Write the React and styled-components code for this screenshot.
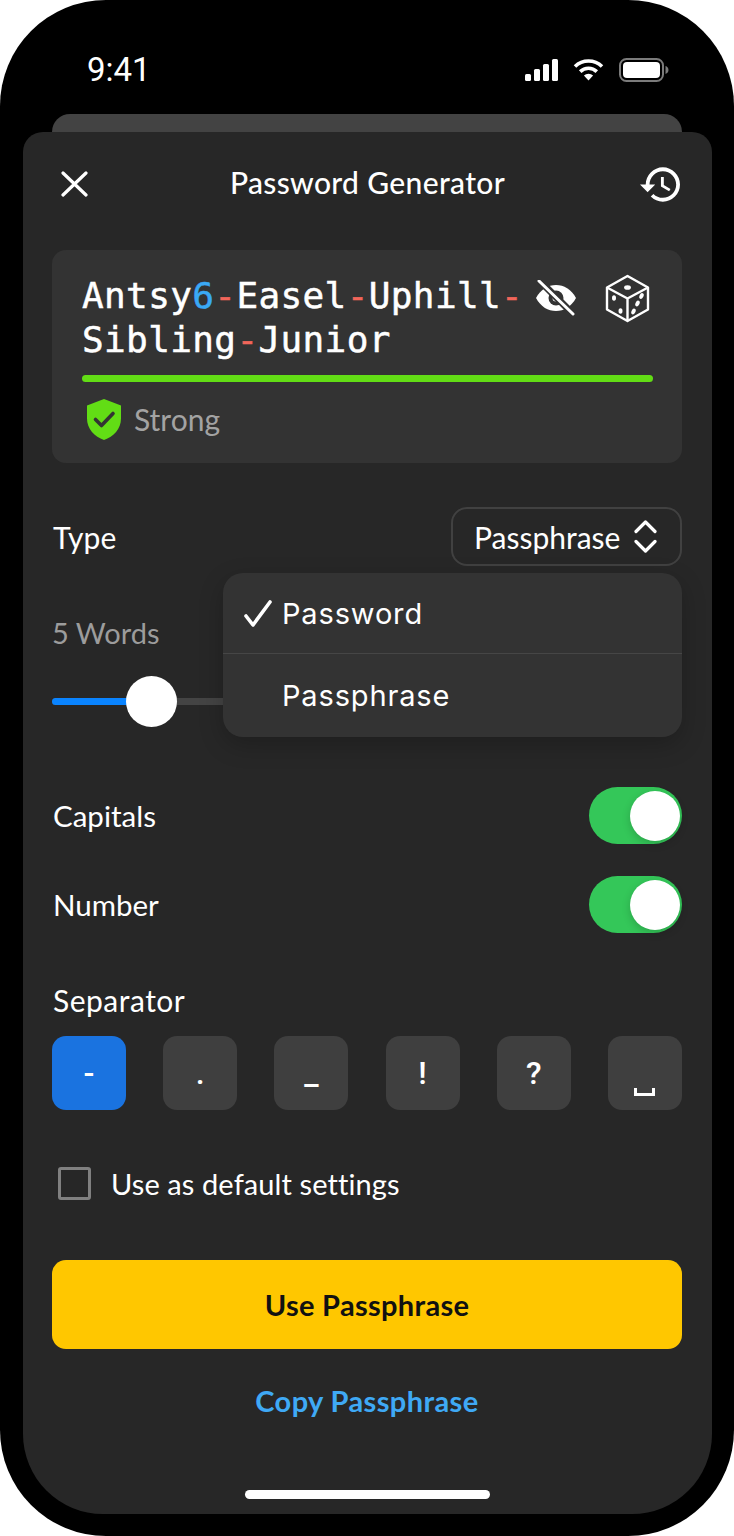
import styled, { createGlobalStyle } from "styled-components";

const GlobalStyle = createGlobalStyle`
  html, body {
    margin: 0;
    padding: 0;
    background: #fff;
  }
  * {
    box-sizing: border-box;
  }
`;

const uiFont = `"Lato", "Noto Sans", sans-serif`;
const monoFont = `"DejaVu Sans Mono", "Liberation Mono", monospace`;

const Phone = styled.div`
  width: 734px;
  height: 1536px;
  background: #000;
  border-radius: 106px;
  padding: 0 22px 0 23px;
  overflow: hidden;
`;

const StatusBar = styled.div`
  height: 114px;
  display: flex;
  align-items: flex-start;
  justify-content: space-between;
  padding: 53px 43px 0 64px;
  color: #fff;
`;

const Clock = styled.span`
  font-family: "Roboto", sans-serif;
  font-size: 33px;
  font-weight: 400;
  line-height: 34px;
`;

const StatusIcons = styled.div`
  display: flex;
  align-items: center;
  gap: 15px;
  height: 30px;
  margin-top: 2px;
`;

const BackCard = styled.div`
  height: 18px;
  margin: 0 30px 0 29px;
  background: #434343;
  border-radius: 20px 20px 0 0;
`;

const Card = styled.div`
  height: 1382px;
  background: #272727;
  border-radius: 20px 20px 80px 80px;
  padding: 0 30px 0 29px;
  font-family: ${uiFont};
  font-size: 30px;
  color: #fff;
`;

const Header = styled.div`
  height: 104px;
  display: flex;
  align-items: center;
  justify-content: space-between;
  padding: 0 2px 0 9px;
  margin-bottom: 14px;
`;

const Title = styled.div`
  font-weight: 500;
  letter-spacing: 0.35px;
  margin: -4px 0 0 7px;
`;

const PasswordBox = styled.div`
  background: #333;
  border-radius: 14px;
  padding: 24px 29px 22px 30px;
`;

const PasswordRow = styled.div`
  display: flex;
  align-items: flex-start;
  justify-content: space-between;
`;

const PasswordText = styled.div`
  font-family: ${monoFont};
  font-size: 36px;
  line-height: 44px;
  letter-spacing: 0.38px;
  white-space: nowrap;
  -webkit-text-stroke: 0.5px currentColor;
`;

const Digit = styled.span`
  color: #3aa9f5;
`;

const Dash = styled.span`
  color: #f2665a;
`;

const PasswordIcons = styled.div`
  display: flex;
  align-items: flex-start;
  gap: 28px;
  margin-right: 3px;
`;

const Strength = styled.div`
  height: 7px;
  margin-top: 13px;
  background: #62dd15;
  border-radius: 4px;
`;

const StrengthLabel = styled.div`
  display: flex;
  align-items: center;
  gap: 13px;
  height: 44px;
  margin-top: 15px;
  padding-left: 5px;
  color: #a3a3a3;
`;

const TypeRow = styled.div`
  position: relative;
  display: flex;
  align-items: center;
  justify-content: space-between;
  margin-top: 44px;
  padding-left: 1px;
`;

const Select = styled.div`
  width: 231px;
  height: 59px;
  display: flex;
  align-items: center;
  justify-content: space-between;
  padding: 0 23px 0 21px;
  border: 2px solid #414141;
  border-radius: 16px;
`;

const Dropdown = styled.div`
  position: absolute;
  top: 66px;
  right: 0;
  z-index: 2;
  width: 459px;
  background: #333;
  border-radius: 20px;
  box-shadow: 0 8px 24px rgba(0, 0, 0, 0.22);
`;

const Option = styled.div`
  height: ${(props) => props.$height}px;
  display: flex;
  align-items: center;
  gap: 10px;
  padding-left: ${(props) => (props.$selected ? 21 : 59)}px;
  border-bottom: ${(props) => (props.$divider ? "1px solid #464646" : "none")};
  font-family: "Inter", sans-serif;
  font-size: 29px;
  letter-spacing: 0.85px;
`;

const WordsLabel = styled.div`
  margin-top: 52px;
  font-size: 29px;
  line-height: 30px;
  color: #9c9c9c;
`;

const Slider = styled.div`
  position: relative;
  height: 51px;
  margin-top: 28px;
  display: flex;
  align-items: center;
`;

const Track = styled.div`
  flex: 1;
  height: 7px;
  background: #444;
  border-radius: 4px;
  overflow: hidden;
`;

const TrackFill = styled.div`
  height: 100%;
  background: #0a84ff;
`;

const Thumb = styled.div`
  position: absolute;
  top: 0;
  width: 51px;
  height: 51px;
  background: #fff;
  border-radius: 50%;
`;

const ToggleRow = styled.div`
  display: flex;
  align-items: center;
  justify-content: space-between;
  height: 57px;
  margin-top: ${(props) => props.$gap}px;
  font-size: 29.5px;
  padding-left: 1px;
`;

const Toggle = styled.div`
  width: 93px;
  height: 57px;
  display: flex;
  align-items: center;
  justify-content: flex-end;
  padding-right: 2px;
  background: #34c759;
  border-radius: 29px;
`;

const Knob = styled.div`
  width: 50px;
  height: 50px;
  background: #fff;
  border-radius: 50%;
  box-shadow: 0 3px 8px rgba(0, 0, 0, 0.18);
`;

const SeparatorLabel = styled.div`
  margin-top: 53px;
  padding-left: 1px;
  line-height: 28px;
  padding-bottom: 2px;
  letter-spacing: 0.5px;
`;

const Separators = styled.div`
  display: flex;
  justify-content: space-between;
  margin-top: 20px;
`;

const Key = styled.div`
  width: 74px;
  height: 74px;
  display: flex;
  align-items: center;
  justify-content: center;
  background: ${(props) => (props.$active ? "#1a73e0" : "#3f3f3f")};
  border-radius: 14px;
  font-family: "Roboto", sans-serif;
  font-weight: 500;
  font-size: 32px;
`;

const SpaceGlyph = styled.span`
  width: 21px;
  height: 8px;
  margin-top: 38px;
  border: 3px solid #fff;
  border-top: 0;
`;

const CheckRow = styled.div`
  display: flex;
  align-items: center;
  gap: 20px;
  height: 33px;
  margin-top: 57px;
  padding-left: 6px;
  font-size: 29px;
  letter-spacing: 0.1px;
`;

const Checkbox = styled.div`
  width: 33px;
  height: 33px;
  border: 3px solid #808080;
  border-radius: 3px;
`;

const PrimaryButton = styled.div`
  height: 89px;
  margin-top: 60px;
  display: flex;
  align-items: center;
  justify-content: center;
  background: #ffc700;
  border-radius: 14px;
  color: #111;
  font-size: 29px;
  font-weight: 700;
  letter-spacing: 0.3px;
`;

const CopyLink = styled.div`
  margin-top: 37px;
  text-align: center;
  color: #3fa9f5;
  font-size: 29px;
  line-height: 30px;
  font-weight: 700;
  letter-spacing: 0.4px;
`;

const HomeBar = styled.div`
  width: 245px;
  height: 9px;
  margin: 74px auto 0;
  background: #fff;
  border-radius: 5px;
`;

const SignalIcon = () => (
  <svg width="33" height="22" viewBox="0 0 33 22" fill="#fff">
    <rect x="0" y="15" width="6" height="7" rx="1.5" />
    <rect x="9" y="10" width="6" height="12" rx="1.5" />
    <rect x="18" y="5" width="6" height="17" rx="1.5" />
    <rect x="27" y="0" width="6" height="22" rx="1.5" />
  </svg>
);

const WifiIcon = () => (
  <svg width="31" height="22" viewBox="0 0 31 22" fill="none" stroke="#fff" strokeWidth="3.6">
    <path d="M2 7.5a19.5 19.5 0 0 1 27 0" />
    <path d="M7.2 12.6a12 12 0 0 1 16.6 0" />
    <path d="M15.5 21.5l-4.6-4.9a6.5 6.5 0 0 1 9.2 0z" fill="#fff" stroke="none" />
  </svg>
);

const BatteryIcon = () => (
  <svg width="50" height="24" viewBox="0 0 50 24">
    <rect x="1" y="1" width="43" height="22" rx="6.5" fill="none" stroke="#7b7b7b" strokeWidth="2" />
    <rect x="4" y="4" width="37" height="16" rx="4" fill="#fff" />
    <path d="M46.5 8v8c1.8-.6 3-2.2 3-4s-1.2-3.400-3-4z" fill="#7b7b7b" />
  </svg>
);

const CloseIcon = () => (
  <svg width="27" height="26" viewBox="0 0 27 26" fill="none" stroke="#fff" strokeWidth="3.2" strokeLinecap="round">
    <path d="M2 2l23 22M25 2L2 24" />
  </svg>
);

const HistoryIcon = () => (
  <svg width="40" height="35" viewBox="1 3 21 18" fill="#fff">
    <path d="M13 3a9 9 0 0 0-9 9H1l3.890 3.890.07.14L9 12H6c0-3.870 3.130-7 7-7s7 3.130 7 7-3.130 7-7 7c-1.930 0-3.680-.79-4.940-2.060l-1.420 1.420A8.954 8.954 0 0 0 13 21a9 9 0 0 0 0-18zm-1 5v5l4.280 2.540.72-1.210-3.500-2.080V8H12z" />
  </svg>
);

const EyeOffIcon = () => (
  <svg width="42" height="36" viewBox="0 0 42 36" style={{ marginTop: 6 }}>
    <path d="M1 18C6 9 13 5 21 5s15 4 20 13c-5 9-12 13-20 13S6 27 1 18z" fill="#fff" />
    <circle cx="21" cy="18" r="7.500" fill="#333" />
    <circle cx="21" cy="18" r="3.500" fill="#fff" />
    <path d="M5 1l33 33" stroke="#333" strokeWidth="7" />
    <path d="M4 1l34 33" stroke="#fff" strokeWidth="3" strokeLinecap="round" />
  </svg>
);

const DiceIcon = () => (
  <svg width="45" height="49" viewBox="0 0 45 49" fill="none" stroke="#fff" strokeWidth="2.400" strokeLinejoin="round">
    <path d="M22.500 2L43 13.500v22L22.500 47 2 35.500v-22z" />
    <path d="M2 13.500l20.500 11 20.500-11M22.500 24.500V47" />
    <g fill="#fff" stroke="none">
      <ellipse cx="22.500" cy="13.500" rx="3.400" ry="2.300" />
      <ellipse cx="9" cy="24" rx="2" ry="2.800" />
      <ellipse cx="15.500" cy="37" rx="2" ry="2.800" />
      <ellipse cx="36.500" cy="22" rx="2" ry="3" transform="rotate(25 36.500 22)" />
      <ellipse cx="32.500" cy="29.500" rx="2" ry="3" transform="rotate(25 32.500 29.500)" />
      <ellipse cx="28.500" cy="37.500" rx="2" ry="3" transform="rotate(25 28.500 37.500)" />
    </g>
  </svg>
);

const ShieldIcon = () => (
  <svg width="34" height="41" viewBox="0 0 34 41">
    <path d="M17 0l17 6.500v13C34 30 26.500 37.500 17 41 7.500 37.500 0 30 0 19.500v-13z" fill="#62dd15" />
    <path d="M8.500 20.500l6 6L26 14.500" fill="none" stroke="#333" strokeWidth="3.600" strokeLinecap="round" strokeLinejoin="round" />
  </svg>
);

const UpDownIcon = () => (
  <svg width="23" height="33" viewBox="0 0 23 33" fill="none" stroke="#fff" strokeWidth="3.200" strokeLinecap="round" strokeLinejoin="round">
    <path d="M2 11.500L11.500 2 21 11.500M2 21.500l9.500 9.500L21 21.500" />
  </svg>
);

const CheckIcon = () => (
  <svg width="28" height="27" viewBox="0 0 28 27" fill="none" stroke="#fff" strokeWidth="3.600" strokeLinecap="round" strokeLinejoin="round">
    <path d="M2 16l7 9L26 2" />
  </svg>
);

const separators = ["-", ".", "_", "!", "?"];

export default function App() {
  const wordsValue = 74;
  return (
    <>
      <GlobalStyle />
      <Phone>
        <StatusBar>
          <Clock>9:41</Clock>
          <StatusIcons>
            <SignalIcon />
            <WifiIcon />
            <BatteryIcon />
          </StatusIcons>
        </StatusBar>
        <BackCard />
        <Card>
          <Header>
            <CloseIcon />
            <Title>Password Generator</Title>
            <HistoryIcon />
          </Header>
          <PasswordBox>
            <PasswordRow>
              <PasswordText>
                Antsy<Digit>6</Digit><Dash>-</Dash>Easel<Dash>-</Dash>Uphill<Dash>-</Dash>
                <br />
                Sibling<Dash>-</Dash>Junior
              </PasswordText>
              <PasswordIcons>
                <EyeOffIcon />
                <DiceIcon />
              </PasswordIcons>
            </PasswordRow>
            <Strength />
            <StrengthLabel>
              <ShieldIcon />
              Strong
            </StrengthLabel>
          </PasswordBox>
          <TypeRow>
            Type
            <Select>
              Passphrase
              <UpDownIcon />
            </Select>
            <Dropdown>
              <Option $height={81} $selected $divider>
                <CheckIcon />
                Password
              </Option>
              <Option $height={83}>Passphrase</Option>
            </Dropdown>
          </TypeRow>
          <WordsLabel>5 Words</WordsLabel>
          <Slider>
            <Track>
              <TrackFill style={{ width: wordsValue + 10 }} />
            </Track>
            <Thumb style={{ left: wordsValue }} />
          </Slider>
          <ToggleRow $gap={60}>
            Capitals
            <Toggle><Knob /></Toggle>
          </ToggleRow>
          <ToggleRow $gap={32}>
            Number
            <Toggle><Knob /></Toggle>
          </ToggleRow>
          <SeparatorLabel>Separator</SeparatorLabel>
          <Separators>
            {separators.map((s, i) => (
              <Key key={s} $active={i === 0}>{s}</Key>
            ))}
            <Key><SpaceGlyph /></Key>
          </Separators>
          <CheckRow>
            <Checkbox />
            Use as default settings
          </CheckRow>
          <PrimaryButton>Use Passphrase</PrimaryButton>
          <CopyLink>Copy Passphrase</CopyLink>
          <HomeBar />
        </Card>
      </Phone>
    </>
  );
}
